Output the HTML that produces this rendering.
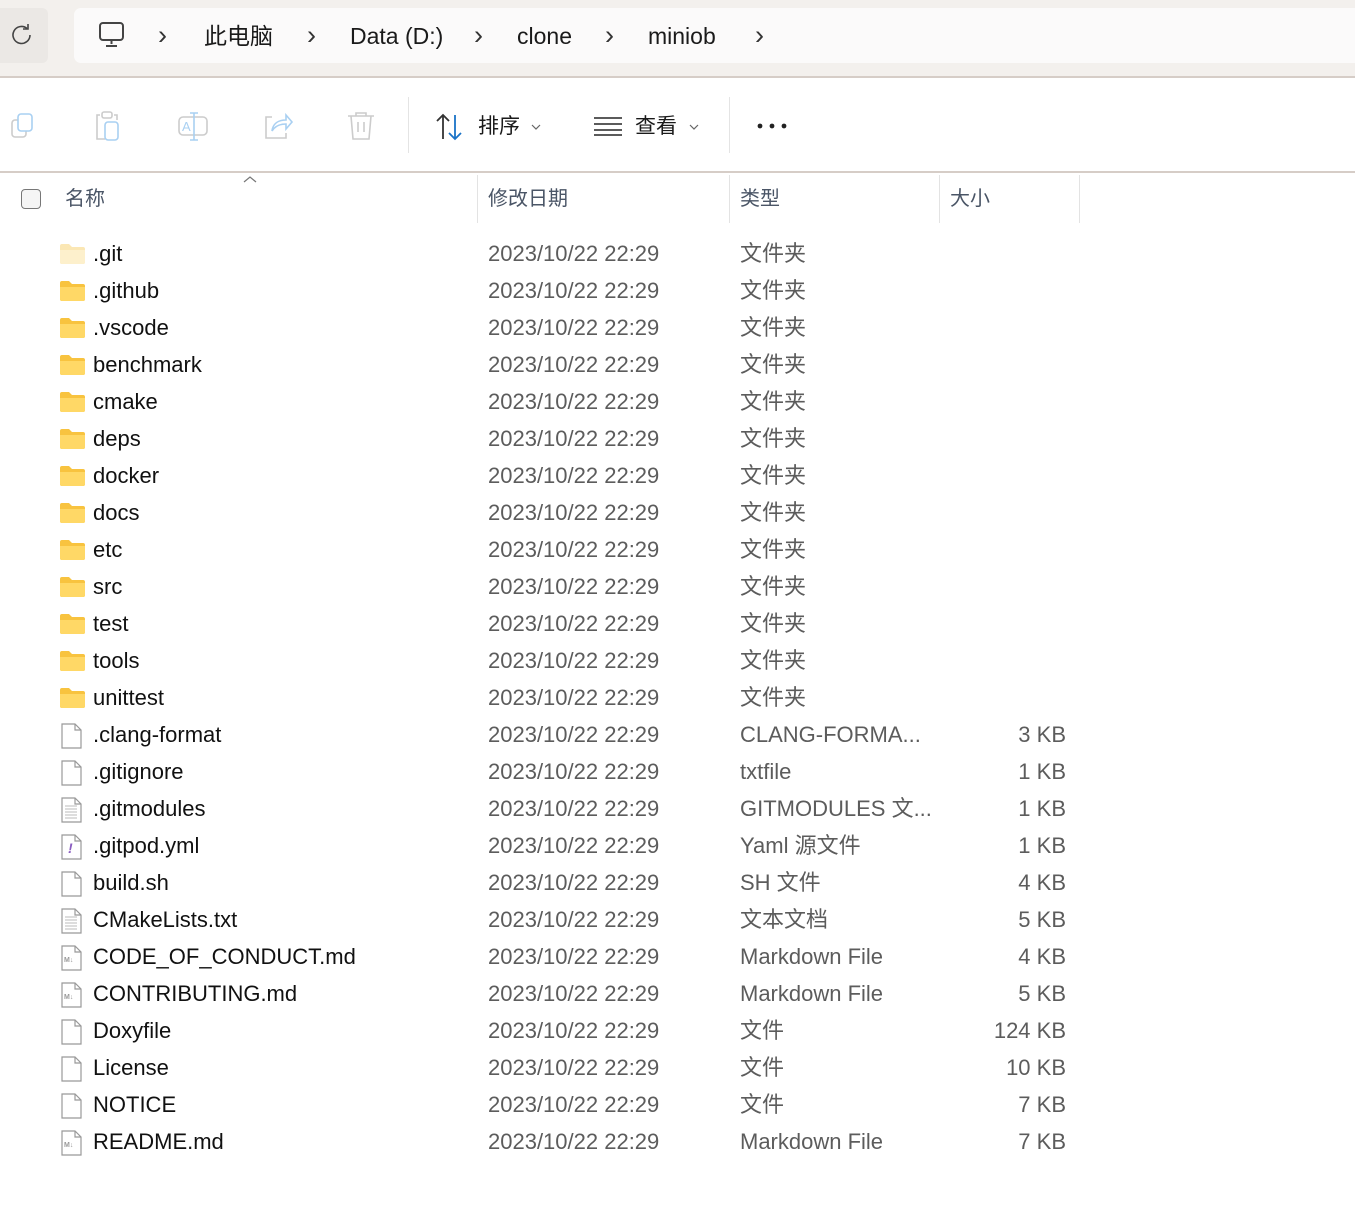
<!DOCTYPE html>
<html><head><meta charset="utf-8"><style>
*{margin:0;padding:0;box-sizing:border-box}
body{width:1355px;height:1217px;background:#fff;font-family:"Liberation Sans","Noto Sans CJK SC",sans-serif;position:relative;overflow:hidden;color:#1a1a1a}
span{line-height:26px}
.top{position:absolute;left:0;top:0;width:1355px;height:78px;background:#f3f0ed;border-bottom:2px solid #d6cdc7}
.ref{position:absolute;left:0;top:8px;width:48px;height:55px;background:#ebe8e5;border-radius:0 6px 6px 0}
.bc{position:absolute;left:74px;top:8px;width:1290px;height:55px;background:#fbfafa;border-radius:7px}
.bt{position:absolute;top:23px;font-size:23px;color:#1a1a1a}
.chev{position:absolute;top:22px;font-size:27px;color:#333}
.tb{position:absolute;left:0;top:80px;width:1355px;height:93px;background:#fff;border-bottom:2px solid #d6cdc7}
.sep{position:absolute;top:97px;width:1px;height:56px;background:#e4e4e4}
.hdr{position:absolute;top:186px;font-size:20px;color:#4a5566}
.colsep{position:absolute;top:175px;width:1px;height:48px;background:#e3e3e3}
.row{position:absolute;left:0;height:37px;width:1355px;font-size:22px}
.row span{position:absolute;top:5px;white-space:nowrap}
.n{left:93px;color:#111}
.d{left:488px;color:#5c5c5c}
.t{left:740px;color:#5c5c5c}
.s{right:289px;color:#5c5c5c}
.ic{position:absolute;left:60px;top:8px}
</style></head><body>
<div class="top">
<div class="ref"><svg width="48" height="55"><path d="M30 27a8.5 8.5 0 1 1-3-6.5" fill="none" stroke="#444" stroke-width="1.6"/><path d="M28 16v5h-5" fill="none" stroke="#444" stroke-width="1.6"/></svg></div>
<div class="bc">
<svg style="position:absolute;left:24px;top:13px" width="28" height="28"><rect x="2" y="2" width="23" height="17" rx="3" fill="none" stroke="#444" stroke-width="2"/><path d="M13.5 19v4M8 25h11" stroke="#444" stroke-width="2"/></svg>
</div>
<span class="chev" style="left:158px">›</span>
<span class="bt" style="left:204px">此电脑</span>
<span class="chev" style="left:307px">›</span>
<span class="bt" style="left:350px">Data (D:)</span>
<span class="chev" style="left:474px">›</span>
<span class="bt" style="left:517px">clone</span>
<span class="chev" style="left:605px">›</span>
<span class="bt" style="left:648px">miniob</span>
<span class="chev" style="left:755px">›</span>
</div>
<div class="tb">
<svg style="position:absolute;left:10px;top:32px" width="30" height="30"><rect x="2" y="8" width="14" height="17" rx="3" fill="none" stroke="#ccc" stroke-width="1.6"/><rect x="8" y="2" width="14" height="17" rx="3" fill="#fff" stroke="#a9d0f2" stroke-width="1.6"/></svg>
<svg style="position:absolute;left:94px;top:30px" width="30" height="34"><path d="M6 5h-3v24h8M20 5h3v5" fill="none" stroke="#ccc" stroke-width="1.6"/><rect x="8" y="2" width="10" height="6" rx="2" fill="none" stroke="#ccc" stroke-width="1.6"/><rect x="11" y="12" width="13" height="18" rx="3" fill="none" stroke="#a9d0f2" stroke-width="1.6"/></svg>
<svg style="position:absolute;left:177px;top:32px" width="34" height="30"><rect x="2" y="5" width="28" height="18" rx="4" fill="none" stroke="#ccc" stroke-width="1.6"/><path d="M17 1v27M13 1h8M13 28h8" stroke="#a9d0f2" stroke-width="1.6"/><text x="5" y="19" font-size="13" fill="#a9d0f2" font-family="Liberation Sans">A</text></svg>
<svg style="position:absolute;left:262px;top:31px" width="32" height="30"><path d="M10 6h-6v21h20v-5" fill="none" stroke="#ccc" stroke-width="1.6"/><path d="M10 20c1-8 7-11 14-11v-5l6 7-6 7v-5c-6 0-11 2-14 7z" fill="none" stroke="#a9d0f2" stroke-width="1.6"/></svg>
<svg style="position:absolute;left:346px;top:30px" width="30" height="32"><path d="M2 6h26M10 6v-3h10v3M5 6l2 23h16l2-23M12 12v10M18 12v10" fill="none" stroke="#ccc" stroke-width="1.6"/></svg>
<svg style="position:absolute;left:434px;top:32px" width="32" height="30"><path d="M9 27V3M3 9l6-6 6 6" fill="none" stroke="#333" stroke-width="1.8"/><path d="M21 3v24M15 21l6 6 6-6" fill="none" stroke="#1a73c7" stroke-width="1.8"/></svg>
<span style="position:absolute;left:478px;top:34px;font-size:21px">排序</span>
<svg style="position:absolute;left:531px;top:44px" width="10" height="6"><path d="M1 1l4 4 4-4" fill="none" stroke="#666" stroke-width="1.2"/></svg>
<svg style="position:absolute;left:593px;top:36px" width="30" height="20"><path d="M1 2h28M1 8h28M1 14h28M1 19h28" stroke="#444" stroke-width="1.8"/></svg>
<span style="position:absolute;left:635px;top:34px;font-size:21px">查看</span>
<svg style="position:absolute;left:689px;top:44px" width="10" height="6"><path d="M1 1l4 4 4-4" fill="none" stroke="#666" stroke-width="1.2"/></svg>
<svg style="position:absolute;left:757px;top:41px" width="32" height="10"><circle cx="3" cy="5" r="2.4" fill="#222"/><circle cx="15" cy="5" r="2.4" fill="#222"/><circle cx="27" cy="5" r="2.4" fill="#222"/></svg>
</div>
<div class="sep" style="left:408px"></div>
<div class="sep" style="left:729px"></div>
<div style="position:absolute;left:21px;top:189px;width:20px;height:20px;border:1.5px solid #777;border-radius:4px;background:#f5f5f5"></div>
<svg style="position:absolute;left:243px;top:175px" width="14" height="8"><path d="M1 7l6-5 6 5" fill="none" stroke="#777" stroke-width="1.2"/></svg>
<span class="hdr" style="left:65px">名称</span>
<div class="colsep" style="left:477px"></div>
<span class="hdr" style="left:488px">修改日期</span>
<div class="colsep" style="left:729px"></div>
<span class="hdr" style="left:740px">类型</span>
<div class="colsep" style="left:939px"></div>
<span class="hdr" style="left:950px">大小</span>
<div class="colsep" style="left:1079px"></div>
<div id="rows"></div>
<script>
var F='<svg class="ic" width="25" height="20"><path d="M0 2q0-2 2-2h7l3 3h11q2 0 2 2v13q0 2-2 2H2q-2 0-2-2z" fill="#f8c33f"/><path d="M0 6h25v12q0 2-2 2H2q-2 0-2-2z" fill="#ffd866"/></svg>';
var FG='<svg class="ic" width="25" height="20"><path d="M0 2q0-2 2-2h7l3 3h11q2 0 2 2v13q0 2-2 2H2q-2 0-2-2z" fill="#fbe7b4"/><path d="M0 6h25v12q0 2-2 2H2q-2 0-2-2z" fill="#fdf0cc"/></svg>';
function doc(extra){return '<svg class="ic" style="left:61px;top:6px" width="22" height="26"><path d="M1 1h13l6 6v18H1z" fill="#fff" stroke="#999" stroke-width="1.2"/><path d="M14 1v6h6" fill="none" stroke="#999" stroke-width="1.2"/>'+extra+'</svg>';}
var P=doc(''),L=doc('<path d="M4 9h12M4 12h12M4 15h12M4 18h12M4 21h12" stroke="#bbb"/>'),Y=doc('<text x="7" y="19" font-size="14" font-style="italic" font-weight="bold" fill="#8a5cc0" font-family="Liberation Sans">!</text>'),M=doc('<text x="3" y="17" font-size="7" font-weight="bold" fill="#999" font-family="Liberation Sans">M↓</text>');
var fol=['.git','.github','.vscode','benchmark','cmake','deps','docker','docs','etc','src','test','tools','unittest'];
var rows=fol.map(function(n,i){return [i?F:FG,n,'文件夹',''];});
rows=rows.concat([[P,'.clang-format','CLANG-FORMA...','3 KB'],[P,'.gitignore','txtfile','1 KB'],[L,'.gitmodules','GITMODULES 文...','1 KB'],[Y,'.gitpod.yml','Yaml 源文件','1 KB'],[P,'build.sh','SH 文件','4 KB'],[L,'CMakeLists.txt','文本文档','5 KB'],[M,'CODE_OF_CONDUCT.md','Markdown File','4 KB'],[M,'CONTRIBUTING.md','Markdown File','5 KB'],[P,'Doxyfile','文件','124 KB'],[P,'License','文件','10 KB'],[P,'NOTICE','文件','7 KB'],[M,'README.md','Markdown File','7 KB']]);
var h='';rows.forEach(function(r,i){h+='<div class="row" style="top:'+(236+i*37)+'px">'+r[0]+'<span class="n">'+r[1]+'</span><span class="d">2023/10/22 22:29</span><span class="t">'+r[2]+'</span><span class="s">'+r[3]+'</span></div>';});
document.getElementById('rows').innerHTML=h;
</script>
</body></html>
